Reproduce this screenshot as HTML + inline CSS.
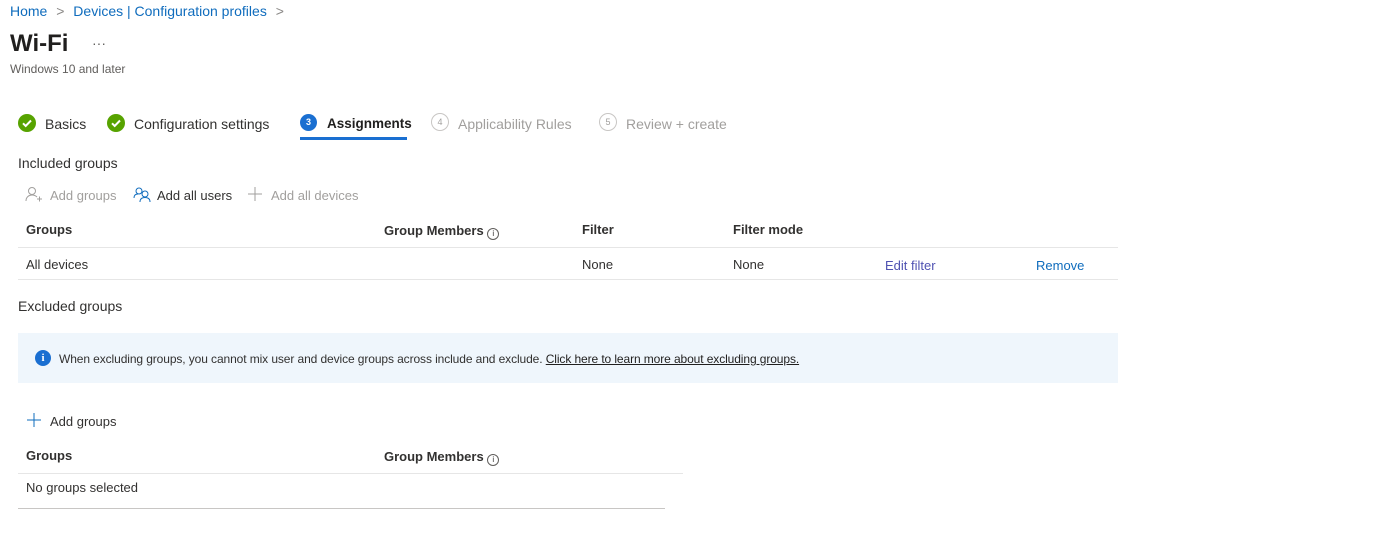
<!DOCTYPE html>
<html><head><meta charset="utf-8"><style>
body{margin:0;width:1387px;height:553px;background:#fff;font-family:"Liberation Sans",sans-serif;color:#323130;position:relative;overflow:hidden}
.a{position:absolute;white-space:nowrap;font-size:13px;line-height:16px}
.blue{color:#0f6cbd}
.gray{color:#a19f9d}
.b{font-weight:bold}
.line{position:absolute;height:1px;background:#e6e6e6}
.chk{position:absolute;width:18px;height:18px;border-radius:50%;background:#57a300}
.num{position:absolute;width:16px;height:16px;border-radius:50%;border:1px solid #c8c6c4;color:#a19f9d;font-size:9px;line-height:16px;text-align:center}
</style></head><body>
<div class="a blue" style="left:10px;top:3px;font-size:14px">Home <span style="color:#8a8886;margin:0 5px">&gt;</span> Devices | Configuration profiles <span style="color:#8a8886;margin-left:5px">&gt;</span></div>
<div class="a" style="left:10px;top:30px;font-size:24px;line-height:28px;font-weight:bold;color:#201f1e">Wi-Fi</div>
<div class="a" style="left:92px;top:35px;font-size:14px;color:#605e5c">···</div>
<div class="a" style="left:10px;top:61px;font-size:12px;color:#605e5c">Windows 10 and later</div>

<div class="chk" style="left:18px;top:114px"><svg width="18" height="18"><path d="M5 9.3l2.7 2.7L13 6.5" stroke="#fff" stroke-width="2" fill="none"/></svg></div>
<div class="a" style="left:45px;top:116px;font-size:14px">Basics</div>
<div class="chk" style="left:107px;top:114px"><svg width="18" height="18"><path d="M5 9.3l2.7 2.7L13 6.5" stroke="#fff" stroke-width="2" fill="none"/></svg></div>
<div class="a" style="left:134px;top:116px;font-size:14px">Configuration settings</div>
<div style="position:absolute;left:300px;top:114px;width:17px;height:17px;border-radius:50%;background:#1a6fd1;color:#fff;font-size:9px;line-height:17px;text-align:center;font-weight:bold">3</div>
<div class="a b" style="left:327px;top:116px;font-size:13.5px;color:#201f1e">Assignments</div>
<div style="position:absolute;left:300px;top:137px;width:107px;height:3px;background:#1a6fd1"></div>
<div class="num" style="left:431px;top:113px">4</div>
<div class="a gray" style="left:458px;top:116px;font-size:14px">Applicability Rules</div>
<div class="num" style="left:599px;top:113px">5</div>
<div class="a gray" style="left:626px;top:116px;font-size:14px">Review + create</div>

<div class="a" style="left:18px;top:155px;font-size:14px">Included groups</div>
<svg style="position:absolute;left:25px;top:186px" width="18" height="18"><circle cx="7" cy="5" r="3.5" stroke="#a19f9d" fill="none"/><path d="M1 15c0-4 3-6 6-6s4 1 5 2M12 13h5M14.5 10.5v5" stroke="#a19f9d" fill="none"/></svg>
<div class="a gray" style="left:50px;top:188px">Add groups</div>
<svg style="position:absolute;left:133px;top:186px" width="20" height="18"><circle cx="6" cy="5" r="3" stroke="#0f6cbd" fill="none"/><circle cx="12" cy="8" r="3" stroke="#0f6cbd" fill="none"/><path d="M1 12c0-3 2-4 4-4M7 16c0-3 2-4.5 5-4.5s5 1.5 5 4.5" stroke="#0f6cbd" fill="none"/></svg>
<div class="a" style="left:157px;top:188px">Add all users</div>
<svg style="position:absolute;left:247px;top:186px" width="16" height="16"><path d="M8 1v14M1 8h14" stroke="#a19f9d" fill="none"/></svg>
<div class="a gray" style="left:271px;top:188px">Add all devices</div>

<div class="a b" style="left:26px;top:222px">Groups</div>
<div class="a b" style="left:384px;top:223px">Group Members <span style="display:inline-block;width:10px;height:10px;border:1px solid #605e5c;border-radius:50%;font-size:8px;line-height:10px;text-align:center;font-weight:normal;vertical-align:-1px">i</span></div>
<div class="a b" style="left:582px;top:222px">Filter</div>
<div class="a b" style="left:733px;top:222px">Filter mode</div>
<div class="line" style="left:18px;top:247px;width:1100px"></div>
<div class="a" style="left:26px;top:257px">All devices</div>
<div class="a" style="left:582px;top:257px">None</div>
<div class="a" style="left:733px;top:257px">None</div>
<div class="a" style="left:885px;top:258px;color:#4f52b2">Edit filter</div>
<div class="a blue" style="left:1036px;top:258px">Remove</div>
<div class="line" style="left:18px;top:279px;width:1100px"></div>

<div class="a" style="left:18px;top:298px;font-size:14px">Excluded groups</div>
<div style="position:absolute;left:18px;top:333px;width:1100px;height:50px;background:#eff6fc"></div>
<div style="position:absolute;left:35px;top:350px;width:16px;height:16px;border-radius:50%;background:#1a6fd1;color:#fff;font-size:11px;line-height:16px;text-align:center;font-weight:bold;font-family:'Liberation Serif',serif">i</div>
<div class="a" style="left:59px;top:351px;font-size:12px;letter-spacing:-0.1px">When excluding groups, you cannot mix user and device groups across include and exclude. <span style="text-decoration:underline;color:#201f1e">Click here to learn more about excluding groups.</span></div>

<svg style="position:absolute;left:26px;top:412px" width="16" height="16"><path d="M8 1v14M1 8h14" stroke="#0f6cbd" fill="none"/></svg>
<div class="a" style="left:50px;top:414px">Add groups</div>
<div class="a b" style="left:26px;top:448px">Groups</div>
<div class="a b" style="left:384px;top:449px">Group Members <span style="display:inline-block;width:10px;height:10px;border:1px solid #605e5c;border-radius:50%;font-size:8px;line-height:10px;text-align:center;font-weight:normal;vertical-align:-1px">i</span></div>
<div class="line" style="left:18px;top:473px;width:665px"></div>
<div class="a" style="left:26px;top:480px">No groups selected</div>
<div class="line" style="left:18px;top:508px;width:647px;background:#c8c6c4"></div>
</body></html>
